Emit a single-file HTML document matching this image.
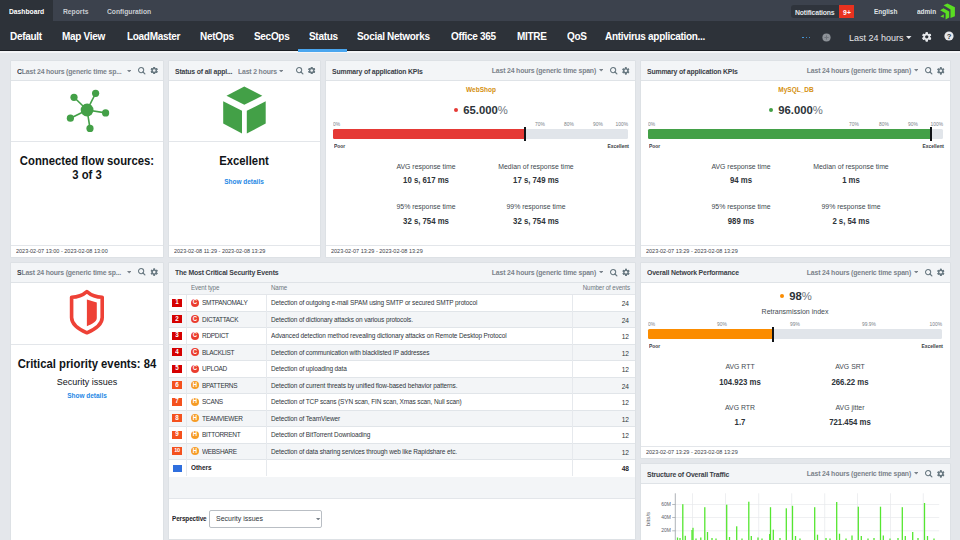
<!DOCTYPE html><html><head><meta charset="utf-8"><style>
html,body{margin:0;padding:0;}
body{width:960px;height:540px;overflow:hidden;position:relative;background:#e4e7eb;font-family:"Liberation Sans",sans-serif;}
.t{position:absolute;white-space:nowrap;}
.r{position:absolute;}
.panel{position:absolute;background:#fff;box-shadow:0 0 0 0.6px #d9dde2;}
.phead{position:absolute;background:#f3f5f7;border-bottom:1px solid #dfe3e7;box-sizing:content-box;}
.pfoot{position:absolute;background:#fff;border-top:1px solid #e3e6ea;box-sizing:border-box;}
</style></head><body>

<div class="r" style="left:0px;top:0px;width:960px;height:21px;background:#3c424d;"></div>
<div class="r" style="left:0px;top:0px;width:53.3px;height:21px;background:#2d3239;"></div>
<div class="t" style="left:9.20px;top:8.92px;font-size:7.155px;line-height:7.155px;font-weight:bold;color:#ffffff;transform:scale(0.9434,1);transform-origin:left center;">Dashboard</div>
<div class="t" style="left:62.60px;top:8.92px;font-size:7.155px;line-height:7.155px;font-weight:bold;color:#c9cdd3;transform:scale(0.9434,1);transform-origin:left center;">Reports</div>
<div class="t" style="left:107.00px;top:8.92px;font-size:7.155px;line-height:7.155px;font-weight:bold;color:#c9cdd3;transform:scale(0.9434,1);transform-origin:left center;">Configuration</div>
<div class="r" style="left:790.5px;top:5.3px;width:49px;height:12.5px;background:#2f343c;border-radius:3px 0 0 3px;"></div>
<div class="r" style="left:839px;top:5.3px;width:14.5px;height:12.5px;background:#e8321f;"></div>
<div class="t" style="left:794.60px;top:9.14px;font-size:7.314px;line-height:7.314px;font-weight:bold;color:#e1e4e8;letter-spacing:-0.180px;transform:scale(0.9434,1);transform-origin:left center;">Notifications</div>
<div class="t" style="left:546.70px;width:600px;text-align:center;top:8.90px;font-size:7.208px;line-height:7.208px;font-weight:bold;color:#ffffff;transform:scale(0.9434,1);transform-origin:center center;">9+</div>
<div class="t" style="left:873.80px;top:9.05px;font-size:6.89px;line-height:6.89px;font-weight:bold;color:#dfe2e6;transform:scale(0.9434,1);transform-origin:left center;">English</div>
<div class="t" style="left:917.00px;top:9.05px;font-size:6.89px;line-height:6.89px;font-weight:bold;color:#dfe2e6;transform:scale(0.9434,1);transform-origin:left center;">admin</div>
<svg class="r" style="left:0;top:0" width="960" height="30"><polygon points="943.5,5.3 947.4,3.6 954.9,7.3 954.9,16.3 950.5,18 950.5,9.6" fill="#5ade22"/><polygon points="940.1,10.2 943.5,8.2 949.2,11.4 949.2,17.6 945.6,19.6 945.6,13.2" fill="#5ade22"/><polygon points="940.4,16.4 943.8,14.2 943.8,17.8" fill="#5ade22"/></svg>
<div class="r" style="left:0px;top:21px;width:960px;height:29px;background:#2d3239;"></div>
<div class="r" style="left:0px;top:49.6px;width:960px;height:1.3px;background:#1b1e23;"></div>
<div class="r" style="left:0px;top:50.9px;width:960px;height:2px;background:#f3f4f6;"></div>
<div class="r" style="left:298.4px;top:48.7px;width:49.1px;height:3.2px;background:#4aa6ef;"></div>
<div class="t" style="left:10.00px;top:31.30px;font-size:10.6px;line-height:10.6px;font-weight:bold;color:#ffffff;letter-spacing:-0.318px;transform:scale(0.9434,1);transform-origin:left center;">Default</div>
<div class="t" style="left:62.30px;top:31.30px;font-size:10.6px;line-height:10.6px;font-weight:bold;color:#ffffff;letter-spacing:-0.318px;transform:scale(0.9434,1);transform-origin:left center;">Map View</div>
<div class="t" style="left:126.70px;top:31.30px;font-size:10.6px;line-height:10.6px;font-weight:bold;color:#ffffff;letter-spacing:-0.318px;transform:scale(0.9434,1);transform-origin:left center;">LoadMaster</div>
<div class="t" style="left:200.30px;top:31.30px;font-size:10.6px;line-height:10.6px;font-weight:bold;color:#ffffff;letter-spacing:-0.318px;transform:scale(0.9434,1);transform-origin:left center;">NetOps</div>
<div class="t" style="left:254.00px;top:31.30px;font-size:10.6px;line-height:10.6px;font-weight:bold;color:#ffffff;letter-spacing:-0.318px;transform:scale(0.9434,1);transform-origin:left center;">SecOps</div>
<div class="t" style="left:308.90px;top:31.30px;font-size:10.6px;line-height:10.6px;font-weight:bold;color:#ffffff;letter-spacing:-0.318px;transform:scale(0.9434,1);transform-origin:left center;">Status</div>
<div class="t" style="left:357.40px;top:31.30px;font-size:10.6px;line-height:10.6px;font-weight:bold;color:#ffffff;letter-spacing:-0.318px;transform:scale(0.9434,1);transform-origin:left center;">Social Networks</div>
<div class="t" style="left:450.50px;top:31.30px;font-size:10.6px;line-height:10.6px;font-weight:bold;color:#ffffff;letter-spacing:-0.318px;transform:scale(0.9434,1);transform-origin:left center;">Office 365</div>
<div class="t" style="left:517.00px;top:31.30px;font-size:10.6px;line-height:10.6px;font-weight:bold;color:#ffffff;letter-spacing:-0.318px;transform:scale(0.9434,1);transform-origin:left center;">MITRE</div>
<div class="t" style="left:566.60px;top:31.30px;font-size:10.6px;line-height:10.6px;font-weight:bold;color:#ffffff;letter-spacing:-0.318px;transform:scale(0.9434,1);transform-origin:left center;">QoS</div>
<div class="t" style="left:605.20px;top:31.30px;font-size:10.6px;line-height:10.6px;font-weight:bold;color:#ffffff;letter-spacing:-0.318px;transform:scale(0.9434,1);transform-origin:left center;">Antivirus application...</div>
<div class="r" style="left:802.4px;top:36.8px;width:1.7px;height:1.7px;background:#4aa6ef;border-radius:50%;"></div>
<div class="r" style="left:805.5px;top:36.8px;width:1.7px;height:1.7px;background:#4aa6ef;border-radius:50%;"></div>
<div class="r" style="left:808.6px;top:36.8px;width:1.7px;height:1.7px;background:#4aa6ef;border-radius:50%;"></div>
<svg class="r" style="left:821.6px;top:33.4px" width="9" height="9" viewBox="0 0 9 9"><circle cx="4.5" cy="4.5" r="4.1" fill="#8d9298"/><line x1="2.4" y1="4.5" x2="6.6" y2="4.5" stroke="#6e737a" stroke-width="1"/><line x1="4.5" y1="2.4" x2="4.5" y2="6.6" stroke="#6e737a" stroke-width="1"/></svg>
<div class="t" style="left:849.00px;top:32.83px;font-size:9.54px;line-height:9.54px;font-weight:normal;color:#e6e8eb;transform:scale(0.9434,1);transform-origin:left center;">Last 24 hours</div>
<svg class="r" style="left:906px;top:36.2px" width="5.5" height="3" viewBox="0 0 5.5 3"><polygon points="0,0 5.5,0 2.75,3" fill="#e6e8eb"/></svg>
<svg class="r" style="left:0;top:0;overflow:visible" width="1" height="1"><circle cx="926.75" cy="36.8" r="3.31" fill="#e6e8eb"/><rect x="925.60" y="32.20" width="2.30" height="9.20" fill="#e6e8eb" transform="rotate(0 926.75 36.8)" rx="0.46"/><rect x="925.60" y="32.20" width="2.30" height="9.20" fill="#e6e8eb" transform="rotate(60 926.75 36.8)" rx="0.46"/><rect x="925.60" y="32.20" width="2.30" height="9.20" fill="#e6e8eb" transform="rotate(120 926.75 36.8)" rx="0.46"/><rect x="925.60" y="32.20" width="2.30" height="9.20" fill="#e6e8eb" transform="rotate(180 926.75 36.8)" rx="0.46"/><rect x="925.60" y="32.20" width="2.30" height="9.20" fill="#e6e8eb" transform="rotate(240 926.75 36.8)" rx="0.46"/><rect x="925.60" y="32.20" width="2.30" height="9.20" fill="#e6e8eb" transform="rotate(300 926.75 36.8)" rx="0.46"/><circle cx="926.75" cy="36.8" r="1.66" fill="#2d3239"/></svg>
<svg class="r" style="left:943.7px;top:31.4px" width="10" height="10" viewBox="0 0 10 10"><circle cx="5" cy="5" r="4.6" fill="#e6e8eb"/><text x="5" y="7.9" font-family="Liberation Sans" font-weight="bold" font-size="7.6" text-anchor="middle" fill="#2d3239">?</text></svg>
<div class="panel" style="left:10.8px;top:61px;width:152.2px;height:196px"></div>
<div class="phead" style="left:10.8px;top:61px;width:152.2px;height:19px"></div>
<div class="pfoot" style="left:10.8px;top:245px;width:152.2px;height:12px"></div>
<div class="t" style="left:15.80px;top:248.69px;font-size:5.83px;line-height:5.83px;font-weight:normal;color:#3c4248;transform:scale(0.9434,1);transform-origin:left center;">2023-02-07 13:00 - 2023-02-08 13:00</div>
<div class="r" style="left:10.8px;top:140.5px;width:152.2px;height:0.8px;background:#e3e6ea;"></div>
<div class="t" style="left:17.00px;top:67.64px;font-size:7.314px;line-height:7.314px;font-weight:bold;color:#7b838b;letter-spacing:-0.180px;transform:scale(0.9434,1);transform-origin:left center;"><span style="color:#3a4046">C</span>Last 24 hours (generic time sp...</div>
<svg class="r" style="left:126.5px;top:69.8px" width="4.4" height="2.4" viewBox="0 0 4.4 2.4"><polygon points="0,0 4.4,0 2.2,2.4" fill="#7b838b"/></svg>
<svg class="r" style="left:137.2px;top:65.7px" width="9" height="9" viewBox="0 0 9 9"><circle cx="4.1" cy="4.1" r="2.6" fill="none" stroke="#687880" stroke-width="1.05"/><line x1="6" y1="6" x2="7.9" y2="7.9" stroke="#687880" stroke-width="1.2" stroke-linecap="round"/></svg>
<svg class="r" style="left:0;top:0;overflow:visible" width="1" height="1"><circle cx="154.2" cy="70.5" r="2.59" fill="#687880"/><rect x="153.30" y="66.90" width="1.80" height="7.20" fill="#687880" transform="rotate(0 154.2 70.5)" rx="0.36"/><rect x="153.30" y="66.90" width="1.80" height="7.20" fill="#687880" transform="rotate(60 154.2 70.5)" rx="0.36"/><rect x="153.30" y="66.90" width="1.80" height="7.20" fill="#687880" transform="rotate(120 154.2 70.5)" rx="0.36"/><rect x="153.30" y="66.90" width="1.80" height="7.20" fill="#687880" transform="rotate(180 154.2 70.5)" rx="0.36"/><rect x="153.30" y="66.90" width="1.80" height="7.20" fill="#687880" transform="rotate(240 154.2 70.5)" rx="0.36"/><rect x="153.30" y="66.90" width="1.80" height="7.20" fill="#687880" transform="rotate(300 154.2 70.5)" rx="0.36"/><circle cx="154.2" cy="70.5" r="1.30" fill="#f3f5f7"/></svg>
<svg class="r" style="left:0;top:0" width="960" height="540"><g stroke="#43a047" stroke-width="1.6"><line x1="87.1" y1="110" x2="74" y2="97.3"/><line x1="87.1" y1="110" x2="95.6" y2="93.3"/><line x1="87.1" y1="110" x2="105.6" y2="112.9"/><line x1="87.1" y1="110" x2="70.4" y2="118.2"/><line x1="87.1" y1="110" x2="90" y2="128.4"/></g><circle cx="87.1" cy="110" r="6.4" fill="#43a047"/><circle cx="74" cy="97.3" r="3.6" fill="#43a047"/><circle cx="95.6" cy="93.3" r="3.6" fill="#43a047"/><circle cx="105.6" cy="112.9" r="3.6" fill="#43a047"/><circle cx="70.4" cy="118.2" r="3.6" fill="#43a047"/><circle cx="90" cy="128.4" r="3.6" fill="#43a047"/></svg>
<div class="t" style="left:-213.00px;width:600px;text-align:center;top:155.01px;font-size:11.978px;line-height:11.978px;font-weight:bold;color:#111418;transform:scale(0.9434,1);transform-origin:center center;">Connected flow sources:</div>
<div class="t" style="left:-213.00px;width:600px;text-align:center;top:169.01px;font-size:11.978px;line-height:11.978px;font-weight:bold;color:#111418;transform:scale(0.9434,1);transform-origin:center center;">3 of 3</div>
<div class="panel" style="left:168.5px;top:61px;width:151.5px;height:196px"></div>
<div class="phead" style="left:168.5px;top:61px;width:151.5px;height:19px"></div>
<div class="pfoot" style="left:168.5px;top:245px;width:151.5px;height:12px"></div>
<div class="t" style="left:173.50px;top:248.69px;font-size:5.83px;line-height:5.83px;font-weight:normal;color:#3c4248;transform:scale(0.9434,1);transform-origin:left center;">2023-02-08 11:29 - 2023-02-08 13:29</div>
<div class="r" style="left:168.5px;top:140.5px;width:151.5px;height:0.8px;background:#e3e6ea;"></div>
<div class="t" style="left:174.90px;top:67.64px;font-size:7.314px;line-height:7.314px;font-weight:bold;color:#3a4046;letter-spacing:-0.180px;transform:scale(0.9434,1);transform-origin:left center;">Status of all appl...</div>
<div class="t" style="left:237.60px;top:67.64px;font-size:7.314px;line-height:7.314px;font-weight:bold;color:#7b838b;letter-spacing:-0.180px;transform:scale(0.9434,1);transform-origin:left center;">Last 2 hours</div>
<svg class="r" style="left:278.8px;top:69.8px" width="4.4" height="2.4" viewBox="0 0 4.4 2.4"><polygon points="0,0 4.4,0 2.2,2.4" fill="#7b838b"/></svg>
<svg class="r" style="left:294.5px;top:65.7px" width="9" height="9" viewBox="0 0 9 9"><circle cx="4.1" cy="4.1" r="2.6" fill="none" stroke="#687880" stroke-width="1.05"/><line x1="6" y1="6" x2="7.9" y2="7.9" stroke="#687880" stroke-width="1.2" stroke-linecap="round"/></svg>
<svg class="r" style="left:0;top:0;overflow:visible" width="1" height="1"><circle cx="311.7" cy="70.5" r="2.59" fill="#687880"/><rect x="310.80" y="66.90" width="1.80" height="7.20" fill="#687880" transform="rotate(0 311.7 70.5)" rx="0.36"/><rect x="310.80" y="66.90" width="1.80" height="7.20" fill="#687880" transform="rotate(60 311.7 70.5)" rx="0.36"/><rect x="310.80" y="66.90" width="1.80" height="7.20" fill="#687880" transform="rotate(120 311.7 70.5)" rx="0.36"/><rect x="310.80" y="66.90" width="1.80" height="7.20" fill="#687880" transform="rotate(180 311.7 70.5)" rx="0.36"/><rect x="310.80" y="66.90" width="1.80" height="7.20" fill="#687880" transform="rotate(240 311.7 70.5)" rx="0.36"/><rect x="310.80" y="66.90" width="1.80" height="7.20" fill="#687880" transform="rotate(300 311.7 70.5)" rx="0.36"/><circle cx="311.7" cy="70.5" r="1.30" fill="#f3f5f7"/></svg>
<svg class="r" style="left:0;top:0" width="960" height="540"><polygon points="244.3,86.5 262.3,95.8 244.3,104.8 226.5,95.8" fill="#43a047"/><polygon points="223.2,101.3 242,110.8 242,133.6 223.2,123.6" fill="#43a047"/><polygon points="265.7,101.3 246.8,110.8 246.8,133.6 265.7,123.6" fill="#43a047"/></svg>
<div class="t" style="left:-55.60px;width:600px;text-align:center;top:154.51px;font-size:11.978px;line-height:11.978px;font-weight:bold;color:#111418;transform:scale(0.9434,1);transform-origin:center center;">Excellent</div>
<div class="t" style="left:-55.60px;width:600px;text-align:center;top:178.56px;font-size:6.89px;line-height:6.89px;font-weight:bold;color:#1e88e5;transform:scale(0.9434,1);transform-origin:center center;">Show details</div>
<div class="panel" style="left:326px;top:61px;width:309px;height:196px"></div>
<div class="phead" style="left:326px;top:61px;width:309px;height:19px"></div>
<div class="pfoot" style="left:326px;top:245px;width:309px;height:12px"></div>
<div class="t" style="left:331.00px;top:248.69px;font-size:5.83px;line-height:5.83px;font-weight:normal;color:#3c4248;transform:scale(0.9434,1);transform-origin:left center;">2023-02-07 13:29 - 2023-02-08 13:29</div>
<div class="t" style="left:332.00px;top:67.64px;font-size:7.314px;line-height:7.314px;font-weight:bold;color:#3a4046;letter-spacing:-0.180px;transform:scale(0.9434,1);transform-origin:left center;">Summary of application KPIs</div>
<svg class="r" style="left:0;top:0;overflow:visible" width="1" height="1"><circle cx="625.8" cy="70.8" r="2.59" fill="#687880"/><rect x="624.90" y="67.20" width="1.80" height="7.20" fill="#687880" transform="rotate(0 625.8 70.8)" rx="0.36"/><rect x="624.90" y="67.20" width="1.80" height="7.20" fill="#687880" transform="rotate(60 625.8 70.8)" rx="0.36"/><rect x="624.90" y="67.20" width="1.80" height="7.20" fill="#687880" transform="rotate(120 625.8 70.8)" rx="0.36"/><rect x="624.90" y="67.20" width="1.80" height="7.20" fill="#687880" transform="rotate(180 625.8 70.8)" rx="0.36"/><rect x="624.90" y="67.20" width="1.80" height="7.20" fill="#687880" transform="rotate(240 625.8 70.8)" rx="0.36"/><rect x="624.90" y="67.20" width="1.80" height="7.20" fill="#687880" transform="rotate(300 625.8 70.8)" rx="0.36"/><circle cx="625.8" cy="70.8" r="1.30" fill="#f3f5f7"/></svg>
<svg class="r" style="left:608.7px;top:66.0px" width="9" height="9" viewBox="0 0 9 9"><circle cx="4.1" cy="4.1" r="2.6" fill="none" stroke="#687880" stroke-width="1.05"/><line x1="6" y1="6" x2="7.9" y2="7.9" stroke="#687880" stroke-width="1.2" stroke-linecap="round"/></svg>
<svg class="r" style="left:598.5px;top:69.3px" width="4.4" height="2.4" viewBox="0 0 4.4 2.4"><polygon points="0,0 4.4,0 2.2,2.4" fill="#7b838b"/></svg>
<div class="t" style="left:-4.00px;width:600px;text-align:right;top:67.14px;font-size:7.314px;line-height:7.314px;font-weight:bold;color:#7b838b;letter-spacing:-0.180px;transform:scale(0.9434,1);transform-origin:right center;">Last 24 hours (generic time span)</div>
<div class="t" style="left:180.50px;width:600px;text-align:center;top:86.56px;font-size:6.89px;line-height:6.89px;font-weight:bold;color:#d4900f;transform:scale(0.9434,1);transform-origin:center center;">WebShop</div>
<div class="t" style="left:181px;width:600px;text-align:center;top:104.5px;font-size:11.3px;line-height:11.3px;font-weight:bold;color:#2d3339"><span style="display:inline-block;width:4px;height:4px;border-radius:50%;background:#e53935;vertical-align:middle;margin-right:5px;position:relative;top:-1px"></span>65.000<span style="font-weight:normal;color:#6d757c">%</span></div>
<div class="r" style="left:333.3px;top:129px;width:295.1px;height:9.8px;background:#e1e5ea;border-radius:1.5px;"></div>
<div class="r" style="left:333.3px;top:129px;width:191.90000000000003px;height:9.8px;background:#e53935;border-radius:1.5px 0 0 1.5px;"></div>
<div class="r" style="left:524.3000000000001px;top:126.9px;width:1.9px;height:14.6px;background:#111418;"></div>
<div class="t" style="left:333.30px;top:121.60px;font-size:5.194px;line-height:5.194px;font-weight:normal;color:#7a8188;transform:scale(0.9434,1);transform-origin:left center;">0%</div>
<div class="t" style="left:239.60px;width:600px;text-align:center;top:121.60px;font-size:5.194px;line-height:5.194px;font-weight:normal;color:#7a8188;transform:scale(0.9434,1);transform-origin:center center;">70%</div>
<div class="t" style="left:269.20px;width:600px;text-align:center;top:121.60px;font-size:5.194px;line-height:5.194px;font-weight:normal;color:#7a8188;transform:scale(0.9434,1);transform-origin:center center;">80%</div>
<div class="t" style="left:298.30px;width:600px;text-align:center;top:121.60px;font-size:5.194px;line-height:5.194px;font-weight:normal;color:#7a8188;transform:scale(0.9434,1);transform-origin:center center;">90%</div>
<div class="t" style="left:28.40px;width:600px;text-align:right;top:121.60px;font-size:5.194px;line-height:5.194px;font-weight:normal;color:#7a8188;transform:scale(0.9434,1);transform-origin:right center;">100%</div>
<div class="t" style="left:333.80px;top:143.80px;font-size:5.194px;line-height:5.194px;font-weight:bold;color:#3a4046;transform:scale(0.9434,1);transform-origin:left center;">Poor</div>
<div class="t" style="left:29.20px;width:600px;text-align:right;top:144.00px;font-size:5.194px;line-height:5.194px;font-weight:bold;color:#3a4046;transform:scale(0.9434,1);transform-origin:right center;">Excellent</div>
<div class="t" style="left:125.70px;width:600px;text-align:center;top:162.64px;font-size:7.314px;line-height:7.314px;font-weight:normal;color:#40474e;transform:scale(0.9434,1);transform-origin:center center;">AVG response time</div>
<div class="t" style="left:125.70px;width:600px;text-align:center;top:177.37px;font-size:8.268px;line-height:8.268px;font-weight:bold;color:#2d3339;transform:scale(0.9434,1);transform-origin:center center;">10 s, 617 ms</div>
<div class="t" style="left:235.80px;width:600px;text-align:center;top:162.64px;font-size:7.314px;line-height:7.314px;font-weight:normal;color:#40474e;transform:scale(0.9434,1);transform-origin:center center;">Median of response time</div>
<div class="t" style="left:235.80px;width:600px;text-align:center;top:177.37px;font-size:8.268px;line-height:8.268px;font-weight:bold;color:#2d3339;transform:scale(0.9434,1);transform-origin:center center;">17 s, 749 ms</div>
<div class="t" style="left:125.70px;width:600px;text-align:center;top:203.24px;font-size:7.314px;line-height:7.314px;font-weight:normal;color:#40474e;transform:scale(0.9434,1);transform-origin:center center;">95% response time</div>
<div class="t" style="left:125.70px;width:600px;text-align:center;top:217.87px;font-size:8.268px;line-height:8.268px;font-weight:bold;color:#2d3339;transform:scale(0.9434,1);transform-origin:center center;">32 s, 754 ms</div>
<div class="t" style="left:235.80px;width:600px;text-align:center;top:203.24px;font-size:7.314px;line-height:7.314px;font-weight:normal;color:#40474e;transform:scale(0.9434,1);transform-origin:center center;">99% response time</div>
<div class="t" style="left:235.80px;width:600px;text-align:center;top:217.87px;font-size:8.268px;line-height:8.268px;font-weight:bold;color:#2d3339;transform:scale(0.9434,1);transform-origin:center center;">32 s, 754 ms</div>
<div class="panel" style="left:641px;top:61px;width:309px;height:196px"></div>
<div class="phead" style="left:641px;top:61px;width:309px;height:19px"></div>
<div class="pfoot" style="left:641px;top:245px;width:309px;height:12px"></div>
<div class="t" style="left:646.00px;top:248.69px;font-size:5.83px;line-height:5.83px;font-weight:normal;color:#3c4248;transform:scale(0.9434,1);transform-origin:left center;">2023-02-07 13:29 - 2023-02-08 13:29</div>
<div class="t" style="left:647.00px;top:67.64px;font-size:7.314px;line-height:7.314px;font-weight:bold;color:#3a4046;letter-spacing:-0.180px;transform:scale(0.9434,1);transform-origin:left center;">Summary of application KPIs</div>
<svg class="r" style="left:0;top:0;overflow:visible" width="1" height="1"><circle cx="940.8" cy="70.8" r="2.59" fill="#687880"/><rect x="939.90" y="67.20" width="1.80" height="7.20" fill="#687880" transform="rotate(0 940.8 70.8)" rx="0.36"/><rect x="939.90" y="67.20" width="1.80" height="7.20" fill="#687880" transform="rotate(60 940.8 70.8)" rx="0.36"/><rect x="939.90" y="67.20" width="1.80" height="7.20" fill="#687880" transform="rotate(120 940.8 70.8)" rx="0.36"/><rect x="939.90" y="67.20" width="1.80" height="7.20" fill="#687880" transform="rotate(180 940.8 70.8)" rx="0.36"/><rect x="939.90" y="67.20" width="1.80" height="7.20" fill="#687880" transform="rotate(240 940.8 70.8)" rx="0.36"/><rect x="939.90" y="67.20" width="1.80" height="7.20" fill="#687880" transform="rotate(300 940.8 70.8)" rx="0.36"/><circle cx="940.8" cy="70.8" r="1.30" fill="#f3f5f7"/></svg>
<svg class="r" style="left:923.7px;top:66.0px" width="9" height="9" viewBox="0 0 9 9"><circle cx="4.1" cy="4.1" r="2.6" fill="none" stroke="#687880" stroke-width="1.05"/><line x1="6" y1="6" x2="7.9" y2="7.9" stroke="#687880" stroke-width="1.2" stroke-linecap="round"/></svg>
<svg class="r" style="left:913.5px;top:69.3px" width="4.4" height="2.4" viewBox="0 0 4.4 2.4"><polygon points="0,0 4.4,0 2.2,2.4" fill="#7b838b"/></svg>
<div class="t" style="left:311.00px;width:600px;text-align:right;top:67.14px;font-size:7.314px;line-height:7.314px;font-weight:bold;color:#7b838b;letter-spacing:-0.180px;transform:scale(0.9434,1);transform-origin:right center;">Last 24 hours (generic time span)</div>
<div class="t" style="left:495.50px;width:600px;text-align:center;top:86.56px;font-size:6.89px;line-height:6.89px;font-weight:bold;color:#d4900f;transform:scale(0.9434,1);transform-origin:center center;">MySQL_DB</div>
<div class="t" style="left:496px;width:600px;text-align:center;top:104.5px;font-size:11.3px;line-height:11.3px;font-weight:bold;color:#2d3339"><span style="display:inline-block;width:4px;height:4px;border-radius:50%;background:#43a047;vertical-align:middle;margin-right:5px;position:relative;top:-1px"></span>96.000<span style="font-weight:normal;color:#6d757c">%</span></div>
<div class="r" style="left:648.3px;top:129px;width:295.1px;height:9.8px;background:#e1e5ea;border-radius:1.5px;"></div>
<div class="r" style="left:648.3px;top:129px;width:282.30000000000007px;height:9.8px;background:#43a047;border-radius:1.5px 0 0 1.5px;"></div>
<div class="r" style="left:929.7px;top:126.9px;width:1.9px;height:14.6px;background:#111418;"></div>
<div class="t" style="left:648.30px;top:121.60px;font-size:5.194px;line-height:5.194px;font-weight:normal;color:#7a8188;transform:scale(0.9434,1);transform-origin:left center;">0%</div>
<div class="t" style="left:554.00px;width:600px;text-align:center;top:121.60px;font-size:5.194px;line-height:5.194px;font-weight:normal;color:#7a8188;transform:scale(0.9434,1);transform-origin:center center;">70%</div>
<div class="t" style="left:583.50px;width:600px;text-align:center;top:121.60px;font-size:5.194px;line-height:5.194px;font-weight:normal;color:#7a8188;transform:scale(0.9434,1);transform-origin:center center;">80%</div>
<div class="t" style="left:612.80px;width:600px;text-align:center;top:121.60px;font-size:5.194px;line-height:5.194px;font-weight:normal;color:#7a8188;transform:scale(0.9434,1);transform-origin:center center;">90%</div>
<div class="t" style="left:343.40px;width:600px;text-align:right;top:121.60px;font-size:5.194px;line-height:5.194px;font-weight:normal;color:#7a8188;transform:scale(0.9434,1);transform-origin:right center;">100%</div>
<div class="t" style="left:648.80px;top:143.80px;font-size:5.194px;line-height:5.194px;font-weight:bold;color:#3a4046;transform:scale(0.9434,1);transform-origin:left center;">Poor</div>
<div class="t" style="left:344.20px;width:600px;text-align:right;top:144.00px;font-size:5.194px;line-height:5.194px;font-weight:bold;color:#3a4046;transform:scale(0.9434,1);transform-origin:right center;">Excellent</div>
<div class="t" style="left:440.70px;width:600px;text-align:center;top:162.64px;font-size:7.314px;line-height:7.314px;font-weight:normal;color:#40474e;transform:scale(0.9434,1);transform-origin:center center;">AVG response time</div>
<div class="t" style="left:440.70px;width:600px;text-align:center;top:177.37px;font-size:8.268px;line-height:8.268px;font-weight:bold;color:#2d3339;transform:scale(0.9434,1);transform-origin:center center;">94 ms</div>
<div class="t" style="left:550.80px;width:600px;text-align:center;top:162.64px;font-size:7.314px;line-height:7.314px;font-weight:normal;color:#40474e;transform:scale(0.9434,1);transform-origin:center center;">Median of response time</div>
<div class="t" style="left:550.80px;width:600px;text-align:center;top:177.37px;font-size:8.268px;line-height:8.268px;font-weight:bold;color:#2d3339;transform:scale(0.9434,1);transform-origin:center center;">1 ms</div>
<div class="t" style="left:440.70px;width:600px;text-align:center;top:203.24px;font-size:7.314px;line-height:7.314px;font-weight:normal;color:#40474e;transform:scale(0.9434,1);transform-origin:center center;">95% response time</div>
<div class="t" style="left:440.70px;width:600px;text-align:center;top:217.87px;font-size:8.268px;line-height:8.268px;font-weight:bold;color:#2d3339;transform:scale(0.9434,1);transform-origin:center center;">989 ms</div>
<div class="t" style="left:550.80px;width:600px;text-align:center;top:203.24px;font-size:7.314px;line-height:7.314px;font-weight:normal;color:#40474e;transform:scale(0.9434,1);transform-origin:center center;">99% response time</div>
<div class="t" style="left:550.80px;width:600px;text-align:center;top:217.87px;font-size:8.268px;line-height:8.268px;font-weight:bold;color:#2d3339;transform:scale(0.9434,1);transform-origin:center center;">2 s, 54 ms</div>
<div class="panel" style="left:10.8px;top:263px;width:152.2px;height:290px"></div>
<div class="phead" style="left:10.8px;top:263px;width:152.2px;height:19px"></div>
<div class="r" style="left:10.8px;top:343.5px;width:152.2px;height:0.8px;background:#e3e6ea;"></div>
<div class="t" style="left:17.00px;top:269.14px;font-size:7.314px;line-height:7.314px;font-weight:bold;color:#7b838b;letter-spacing:-0.180px;transform:scale(0.9434,1);transform-origin:left center;"><span style="color:#3a4046">S</span>Last 24 hours (generic time sp...</div>
<svg class="r" style="left:126.5px;top:271.3px" width="4.4" height="2.4" viewBox="0 0 4.4 2.4"><polygon points="0,0 4.4,0 2.2,2.4" fill="#7b838b"/></svg>
<svg class="r" style="left:137.2px;top:267.3px" width="9" height="9" viewBox="0 0 9 9"><circle cx="4.1" cy="4.1" r="2.6" fill="none" stroke="#687880" stroke-width="1.05"/><line x1="6" y1="6" x2="7.9" y2="7.9" stroke="#687880" stroke-width="1.2" stroke-linecap="round"/></svg>
<svg class="r" style="left:0;top:0;overflow:visible" width="1" height="1"><circle cx="154.2" cy="272.1" r="2.59" fill="#687880"/><rect x="153.30" y="268.50" width="1.80" height="7.20" fill="#687880" transform="rotate(0 154.2 272.1)" rx="0.36"/><rect x="153.30" y="268.50" width="1.80" height="7.20" fill="#687880" transform="rotate(60 154.2 272.1)" rx="0.36"/><rect x="153.30" y="268.50" width="1.80" height="7.20" fill="#687880" transform="rotate(120 154.2 272.1)" rx="0.36"/><rect x="153.30" y="268.50" width="1.80" height="7.20" fill="#687880" transform="rotate(180 154.2 272.1)" rx="0.36"/><rect x="153.30" y="268.50" width="1.80" height="7.20" fill="#687880" transform="rotate(240 154.2 272.1)" rx="0.36"/><rect x="153.30" y="268.50" width="1.80" height="7.20" fill="#687880" transform="rotate(300 154.2 272.1)" rx="0.36"/><circle cx="154.2" cy="272.1" r="1.30" fill="#f3f5f7"/></svg>
<svg class="r" style="left:0;top:0" width="960" height="540"><path d="M86.9,291.6 Q80.5,297.2 71.6,297.2 L71.6,317.5 C71.6,324 78,329 86.9,332.8 C95.8,329 102.2,324 102.2,317.5 L102.2,297.2 Q93.3,297.2 86.9,291.6 Z" fill="none" stroke="#ee4136" stroke-width="3.6" stroke-linejoin="round"/><path d="M86.9,299.4 L96.8,302.6 L96.8,318 C96.8,321.5 92.5,324 86.9,326.2 Z" fill="#ee4136"/></svg>
<div class="t" style="left:-213.20px;width:600px;text-align:center;top:357.71px;font-size:11.978px;line-height:11.978px;font-weight:bold;color:#111418;transform:scale(0.9434,1);transform-origin:center center;">Critical priority events: 84</div>
<div class="t" style="left:-213.20px;width:600px;text-align:center;top:376.63px;font-size:9.54px;line-height:9.54px;font-weight:normal;color:#111418;transform:scale(0.9434,1);transform-origin:center center;">Security issues</div>
<div class="t" style="left:-213.20px;width:600px;text-align:center;top:392.95px;font-size:6.89px;line-height:6.89px;font-weight:bold;color:#1e88e5;transform:scale(0.9434,1);transform-origin:center center;">Show details</div>
<div class="panel" style="left:168.5px;top:263px;width:466.7px;height:276px"></div>
<div class="phead" style="left:168.5px;top:263px;width:466.7px;height:19px"></div>
<div class="t" style="left:174.60px;top:269.14px;font-size:7.314px;line-height:7.314px;font-weight:bold;color:#3a4046;letter-spacing:-0.180px;transform:scale(0.9434,1);transform-origin:left center;">The Most Critical Security Events</div>
<svg class="r" style="left:0;top:0;overflow:visible" width="1" height="1"><circle cx="626.0" cy="272.3" r="2.59" fill="#687880"/><rect x="625.10" y="268.70" width="1.80" height="7.20" fill="#687880" transform="rotate(0 626.0 272.3)" rx="0.36"/><rect x="625.10" y="268.70" width="1.80" height="7.20" fill="#687880" transform="rotate(60 626.0 272.3)" rx="0.36"/><rect x="625.10" y="268.70" width="1.80" height="7.20" fill="#687880" transform="rotate(120 626.0 272.3)" rx="0.36"/><rect x="625.10" y="268.70" width="1.80" height="7.20" fill="#687880" transform="rotate(180 626.0 272.3)" rx="0.36"/><rect x="625.10" y="268.70" width="1.80" height="7.20" fill="#687880" transform="rotate(240 626.0 272.3)" rx="0.36"/><rect x="625.10" y="268.70" width="1.80" height="7.20" fill="#687880" transform="rotate(300 626.0 272.3)" rx="0.36"/><circle cx="626.0" cy="272.3" r="1.30" fill="#f3f5f7"/></svg>
<svg class="r" style="left:608.9000000000001px;top:267.5px" width="9" height="9" viewBox="0 0 9 9"><circle cx="4.1" cy="4.1" r="2.6" fill="none" stroke="#687880" stroke-width="1.05"/><line x1="6" y1="6" x2="7.9" y2="7.9" stroke="#687880" stroke-width="1.2" stroke-linecap="round"/></svg>
<svg class="r" style="left:598.7px;top:270.8px" width="4.4" height="2.4" viewBox="0 0 4.4 2.4"><polygon points="0,0 4.4,0 2.2,2.4" fill="#7b838b"/></svg>
<div class="t" style="left:-3.80px;width:600px;text-align:right;top:268.64px;font-size:7.314px;line-height:7.314px;font-weight:bold;color:#7b838b;letter-spacing:-0.180px;transform:scale(0.9434,1);transform-origin:right center;">Last 24 hours (generic time span)</div>
<div class="r" style="left:168.5px;top:282.5px;width:466.7px;height:11.8px;background:#f3f5f7;"></div>
<div class="r" style="left:168.5px;top:294.2px;width:466.7px;height:0.7px;background:#e3e6ea;"></div>
<div class="t" style="left:191.30px;top:284.91px;font-size:6.572px;line-height:6.572px;font-weight:normal;color:#6f777e;letter-spacing:-0.106px;transform:scale(0.9434,1);transform-origin:left center;">Event type</div>
<div class="t" style="left:270.90px;top:284.91px;font-size:6.572px;line-height:6.572px;font-weight:normal;color:#6f777e;letter-spacing:-0.106px;transform:scale(0.9434,1);transform-origin:left center;">Name</div>
<div class="t" style="left:29.60px;width:600px;text-align:right;top:284.91px;font-size:6.572px;line-height:6.572px;font-weight:normal;color:#6f777e;letter-spacing:-0.106px;transform:scale(0.9434,1);transform-origin:right center;">Number of events</div>
<div class="r" style="left:168.5px;top:294.6px;width:466.7px;height:16.5px;background:#ffffff;"></div>
<div class="r" style="left:172.4px;top:298.95000000000005px;width:9.6px;height:7.8px;background:#d50000;"></div>
<div class="t" style="left:-122.80px;width:600px;text-align:center;top:299.31px;font-size:6.678px;line-height:6.678px;font-weight:bold;color:#fff;transform:scale(0.9434,1);transform-origin:center center;">1</div>
<div class="r" style="left:191px;top:298.85px;width:8px;height:8px;background:#ea3d2f;border-radius:50%;"></div>
<div class="t" style="left:-104.90px;width:600px;text-align:center;top:299.47px;font-size:6.36px;line-height:6.36px;font-weight:bold;color:#fff;transform:scale(0.9434,1);transform-origin:center center;">C</div>
<div class="t" style="left:201.70px;top:300.41px;font-size:6.89px;line-height:6.89px;font-weight:normal;color:#2f353b;letter-spacing:-0.318px;transform:scale(0.9434,1);transform-origin:left center;">SMTPANOMALY</div>
<div class="t" style="left:270.90px;top:300.41px;font-size:6.89px;line-height:6.89px;font-weight:normal;color:#2f353b;letter-spacing:-0.127px;transform:scale(0.9434,1);transform-origin:left center;">Detection of outgoing e-mail SPAM using SMTP or secured SMTP protocol</div>
<div class="t" style="left:29.40px;width:600px;text-align:right;top:300.35px;font-size:6.996px;line-height:6.996px;font-weight:normal;color:#2f353b;transform:scale(0.9434,1);transform-origin:right center;">24</div>
<div class="r" style="left:168.5px;top:311.1px;width:466.7px;height:16.5px;background:#f3f5f7;"></div>
<div class="r" style="left:172.4px;top:315.45000000000005px;width:9.6px;height:7.8px;background:#d50000;"></div>
<div class="t" style="left:-122.80px;width:600px;text-align:center;top:315.81px;font-size:6.678px;line-height:6.678px;font-weight:bold;color:#fff;transform:scale(0.9434,1);transform-origin:center center;">2</div>
<div class="r" style="left:191px;top:315.35px;width:8px;height:8px;background:#ea3d2f;border-radius:50%;"></div>
<div class="t" style="left:-104.90px;width:600px;text-align:center;top:315.97px;font-size:6.36px;line-height:6.36px;font-weight:bold;color:#fff;transform:scale(0.9434,1);transform-origin:center center;">C</div>
<div class="t" style="left:201.70px;top:316.91px;font-size:6.89px;line-height:6.89px;font-weight:normal;color:#2f353b;letter-spacing:-0.318px;transform:scale(0.9434,1);transform-origin:left center;">DICTATTACK</div>
<div class="t" style="left:270.90px;top:316.91px;font-size:6.89px;line-height:6.89px;font-weight:normal;color:#2f353b;letter-spacing:-0.127px;transform:scale(0.9434,1);transform-origin:left center;">Detection of dictionary attacks on various protocols.</div>
<div class="t" style="left:29.40px;width:600px;text-align:right;top:316.85px;font-size:6.996px;line-height:6.996px;font-weight:normal;color:#2f353b;transform:scale(0.9434,1);transform-origin:right center;">24</div>
<div class="r" style="left:168.5px;top:327.6px;width:466.7px;height:16.5px;background:#ffffff;"></div>
<div class="r" style="left:172.4px;top:331.95000000000005px;width:9.6px;height:7.8px;background:#d50000;"></div>
<div class="t" style="left:-122.80px;width:600px;text-align:center;top:332.31px;font-size:6.678px;line-height:6.678px;font-weight:bold;color:#fff;transform:scale(0.9434,1);transform-origin:center center;">3</div>
<div class="r" style="left:191px;top:331.85px;width:8px;height:8px;background:#ea3d2f;border-radius:50%;"></div>
<div class="t" style="left:-104.90px;width:600px;text-align:center;top:332.47px;font-size:6.36px;line-height:6.36px;font-weight:bold;color:#fff;transform:scale(0.9434,1);transform-origin:center center;">C</div>
<div class="t" style="left:201.70px;top:333.41px;font-size:6.89px;line-height:6.89px;font-weight:normal;color:#2f353b;letter-spacing:-0.318px;transform:scale(0.9434,1);transform-origin:left center;">RDPDICT</div>
<div class="t" style="left:270.90px;top:333.41px;font-size:6.89px;line-height:6.89px;font-weight:normal;color:#2f353b;letter-spacing:-0.127px;transform:scale(0.9434,1);transform-origin:left center;">Advanced detection method revealing dictionary attacks on Remote Desktop Protocol</div>
<div class="t" style="left:29.40px;width:600px;text-align:right;top:333.35px;font-size:6.996px;line-height:6.996px;font-weight:normal;color:#2f353b;transform:scale(0.9434,1);transform-origin:right center;">12</div>
<div class="r" style="left:168.5px;top:344.1px;width:466.7px;height:16.5px;background:#f3f5f7;"></div>
<div class="r" style="left:172.4px;top:348.45000000000005px;width:9.6px;height:7.8px;background:#d50000;"></div>
<div class="t" style="left:-122.80px;width:600px;text-align:center;top:348.81px;font-size:6.678px;line-height:6.678px;font-weight:bold;color:#fff;transform:scale(0.9434,1);transform-origin:center center;">4</div>
<div class="r" style="left:191px;top:348.35px;width:8px;height:8px;background:#ea3d2f;border-radius:50%;"></div>
<div class="t" style="left:-104.90px;width:600px;text-align:center;top:348.97px;font-size:6.36px;line-height:6.36px;font-weight:bold;color:#fff;transform:scale(0.9434,1);transform-origin:center center;">C</div>
<div class="t" style="left:201.70px;top:349.91px;font-size:6.89px;line-height:6.89px;font-weight:normal;color:#2f353b;letter-spacing:-0.318px;transform:scale(0.9434,1);transform-origin:left center;">BLACKLIST</div>
<div class="t" style="left:270.90px;top:349.91px;font-size:6.89px;line-height:6.89px;font-weight:normal;color:#2f353b;letter-spacing:-0.127px;transform:scale(0.9434,1);transform-origin:left center;">Detection of communication with blacklisted IP addresses</div>
<div class="t" style="left:29.40px;width:600px;text-align:right;top:349.85px;font-size:6.996px;line-height:6.996px;font-weight:normal;color:#2f353b;transform:scale(0.9434,1);transform-origin:right center;">12</div>
<div class="r" style="left:168.5px;top:360.6px;width:466.7px;height:16.5px;background:#ffffff;"></div>
<div class="r" style="left:172.4px;top:364.95000000000005px;width:9.6px;height:7.8px;background:#d50000;"></div>
<div class="t" style="left:-122.80px;width:600px;text-align:center;top:365.31px;font-size:6.678px;line-height:6.678px;font-weight:bold;color:#fff;transform:scale(0.9434,1);transform-origin:center center;">5</div>
<div class="r" style="left:191px;top:364.85px;width:8px;height:8px;background:#ea3d2f;border-radius:50%;"></div>
<div class="t" style="left:-104.90px;width:600px;text-align:center;top:365.47px;font-size:6.36px;line-height:6.36px;font-weight:bold;color:#fff;transform:scale(0.9434,1);transform-origin:center center;">C</div>
<div class="t" style="left:201.70px;top:366.41px;font-size:6.89px;line-height:6.89px;font-weight:normal;color:#2f353b;letter-spacing:-0.318px;transform:scale(0.9434,1);transform-origin:left center;">UPLOAD</div>
<div class="t" style="left:270.90px;top:366.41px;font-size:6.89px;line-height:6.89px;font-weight:normal;color:#2f353b;letter-spacing:-0.127px;transform:scale(0.9434,1);transform-origin:left center;">Detection of uploading data</div>
<div class="t" style="left:29.40px;width:600px;text-align:right;top:366.35px;font-size:6.996px;line-height:6.996px;font-weight:normal;color:#2f353b;transform:scale(0.9434,1);transform-origin:right center;">12</div>
<div class="r" style="left:168.5px;top:377.1px;width:466.7px;height:16.5px;background:#f3f5f7;"></div>
<div class="r" style="left:172.4px;top:381.45000000000005px;width:9.6px;height:7.8px;background:#f4511e;"></div>
<div class="t" style="left:-122.80px;width:600px;text-align:center;top:381.81px;font-size:6.678px;line-height:6.678px;font-weight:bold;color:#fff;transform:scale(0.9434,1);transform-origin:center center;">6</div>
<div class="r" style="left:191px;top:381.35px;width:8px;height:8px;background:#f69c26;border-radius:50%;"></div>
<div class="t" style="left:-104.90px;width:600px;text-align:center;top:381.97px;font-size:6.36px;line-height:6.36px;font-weight:bold;color:#fff;transform:scale(0.9434,1);transform-origin:center center;">H</div>
<div class="t" style="left:201.70px;top:382.91px;font-size:6.89px;line-height:6.89px;font-weight:normal;color:#2f353b;letter-spacing:-0.318px;transform:scale(0.9434,1);transform-origin:left center;">BPATTERNS</div>
<div class="t" style="left:270.90px;top:382.91px;font-size:6.89px;line-height:6.89px;font-weight:normal;color:#2f353b;letter-spacing:-0.127px;transform:scale(0.9434,1);transform-origin:left center;">Detection of current threats by unified flow-based behavior patterns.</div>
<div class="t" style="left:29.40px;width:600px;text-align:right;top:382.85px;font-size:6.996px;line-height:6.996px;font-weight:normal;color:#2f353b;transform:scale(0.9434,1);transform-origin:right center;">24</div>
<div class="r" style="left:168.5px;top:393.6px;width:466.7px;height:16.5px;background:#ffffff;"></div>
<div class="r" style="left:172.4px;top:397.95000000000005px;width:9.6px;height:7.8px;background:#f4511e;"></div>
<div class="t" style="left:-122.80px;width:600px;text-align:center;top:398.31px;font-size:6.678px;line-height:6.678px;font-weight:bold;color:#fff;transform:scale(0.9434,1);transform-origin:center center;">7</div>
<div class="r" style="left:191px;top:397.85px;width:8px;height:8px;background:#f69c26;border-radius:50%;"></div>
<div class="t" style="left:-104.90px;width:600px;text-align:center;top:398.47px;font-size:6.36px;line-height:6.36px;font-weight:bold;color:#fff;transform:scale(0.9434,1);transform-origin:center center;">H</div>
<div class="t" style="left:201.70px;top:399.41px;font-size:6.89px;line-height:6.89px;font-weight:normal;color:#2f353b;letter-spacing:-0.318px;transform:scale(0.9434,1);transform-origin:left center;">SCANS</div>
<div class="t" style="left:270.90px;top:399.41px;font-size:6.89px;line-height:6.89px;font-weight:normal;color:#2f353b;letter-spacing:-0.127px;transform:scale(0.9434,1);transform-origin:left center;">Detection of TCP scans (SYN scan, FIN scan, Xmas scan, Null scan)</div>
<div class="t" style="left:29.40px;width:600px;text-align:right;top:399.35px;font-size:6.996px;line-height:6.996px;font-weight:normal;color:#2f353b;transform:scale(0.9434,1);transform-origin:right center;">12</div>
<div class="r" style="left:168.5px;top:410.1px;width:466.7px;height:16.5px;background:#f3f5f7;"></div>
<div class="r" style="left:172.4px;top:414.45000000000005px;width:9.6px;height:7.8px;background:#f4511e;"></div>
<div class="t" style="left:-122.80px;width:600px;text-align:center;top:414.81px;font-size:6.678px;line-height:6.678px;font-weight:bold;color:#fff;transform:scale(0.9434,1);transform-origin:center center;">8</div>
<div class="r" style="left:191px;top:414.35px;width:8px;height:8px;background:#f69c26;border-radius:50%;"></div>
<div class="t" style="left:-104.90px;width:600px;text-align:center;top:414.97px;font-size:6.36px;line-height:6.36px;font-weight:bold;color:#fff;transform:scale(0.9434,1);transform-origin:center center;">H</div>
<div class="t" style="left:201.70px;top:415.91px;font-size:6.89px;line-height:6.89px;font-weight:normal;color:#2f353b;letter-spacing:-0.318px;transform:scale(0.9434,1);transform-origin:left center;">TEAMVIEWER</div>
<div class="t" style="left:270.90px;top:415.91px;font-size:6.89px;line-height:6.89px;font-weight:normal;color:#2f353b;letter-spacing:-0.127px;transform:scale(0.9434,1);transform-origin:left center;">Detection of TeamViewer</div>
<div class="t" style="left:29.40px;width:600px;text-align:right;top:415.85px;font-size:6.996px;line-height:6.996px;font-weight:normal;color:#2f353b;transform:scale(0.9434,1);transform-origin:right center;">12</div>
<div class="r" style="left:168.5px;top:426.6px;width:466.7px;height:16.5px;background:#ffffff;"></div>
<div class="r" style="left:172.4px;top:430.95000000000005px;width:9.6px;height:7.8px;background:#f4511e;"></div>
<div class="t" style="left:-122.80px;width:600px;text-align:center;top:431.31px;font-size:6.678px;line-height:6.678px;font-weight:bold;color:#fff;transform:scale(0.9434,1);transform-origin:center center;">9</div>
<div class="r" style="left:191px;top:430.85px;width:8px;height:8px;background:#f69c26;border-radius:50%;"></div>
<div class="t" style="left:-104.90px;width:600px;text-align:center;top:431.47px;font-size:6.36px;line-height:6.36px;font-weight:bold;color:#fff;transform:scale(0.9434,1);transform-origin:center center;">H</div>
<div class="t" style="left:201.70px;top:432.41px;font-size:6.89px;line-height:6.89px;font-weight:normal;color:#2f353b;letter-spacing:-0.318px;transform:scale(0.9434,1);transform-origin:left center;">BITTORRENT</div>
<div class="t" style="left:270.90px;top:432.41px;font-size:6.89px;line-height:6.89px;font-weight:normal;color:#2f353b;letter-spacing:-0.127px;transform:scale(0.9434,1);transform-origin:left center;">Detection of BitTorrent Downloading</div>
<div class="t" style="left:29.40px;width:600px;text-align:right;top:432.35px;font-size:6.996px;line-height:6.996px;font-weight:normal;color:#2f353b;transform:scale(0.9434,1);transform-origin:right center;">12</div>
<div class="r" style="left:168.5px;top:443.1px;width:466.7px;height:16.5px;background:#f3f5f7;"></div>
<div class="r" style="left:172.4px;top:447.45000000000005px;width:9.6px;height:7.8px;background:#f4511e;"></div>
<div class="t" style="left:-122.80px;width:600px;text-align:center;top:448.18px;font-size:5.936px;line-height:5.936px;font-weight:bold;color:#fff;letter-spacing:-0.318px;transform:scale(0.9434,1);transform-origin:center center;">10</div>
<div class="r" style="left:191px;top:447.35px;width:8px;height:8px;background:#f69c26;border-radius:50%;"></div>
<div class="t" style="left:-104.90px;width:600px;text-align:center;top:447.97px;font-size:6.36px;line-height:6.36px;font-weight:bold;color:#fff;transform:scale(0.9434,1);transform-origin:center center;">H</div>
<div class="t" style="left:201.70px;top:448.91px;font-size:6.89px;line-height:6.89px;font-weight:normal;color:#2f353b;letter-spacing:-0.318px;transform:scale(0.9434,1);transform-origin:left center;">WEBSHARE</div>
<div class="t" style="left:270.90px;top:448.91px;font-size:6.89px;line-height:6.89px;font-weight:normal;color:#2f353b;letter-spacing:-0.127px;transform:scale(0.9434,1);transform-origin:left center;">Detection of data sharing services through web like Rapidshare etc.</div>
<div class="t" style="left:29.40px;width:600px;text-align:right;top:448.85px;font-size:6.996px;line-height:6.996px;font-weight:normal;color:#2f353b;transform:scale(0.9434,1);transform-origin:right center;">12</div>
<svg class="r" style="left:0;top:0" width="960" height="540"></svg>
<div class="r" style="left:168.5px;top:310.6px;width:466.7px;height:1px;background:#e1e5e9;"></div>
<div class="r" style="left:168.5px;top:327.1px;width:466.7px;height:1px;background:#e1e5e9;"></div>
<div class="r" style="left:168.5px;top:343.6px;width:466.7px;height:1px;background:#e1e5e9;"></div>
<div class="r" style="left:168.5px;top:360.1px;width:466.7px;height:1px;background:#e1e5e9;"></div>
<div class="r" style="left:168.5px;top:376.6px;width:466.7px;height:1px;background:#e1e5e9;"></div>
<div class="r" style="left:168.5px;top:393.1px;width:466.7px;height:1px;background:#e1e5e9;"></div>
<div class="r" style="left:168.5px;top:409.6px;width:466.7px;height:1px;background:#e1e5e9;"></div>
<div class="r" style="left:168.5px;top:426.1px;width:466.7px;height:1px;background:#e1e5e9;"></div>
<div class="r" style="left:168.5px;top:442.6px;width:466.7px;height:1px;background:#e1e5e9;"></div>
<div class="r" style="left:168.5px;top:459.1px;width:466.7px;height:1px;background:#e1e5e9;"></div>
<div class="r" style="left:168.5px;top:459.6px;width:466.7px;height:16.9px;background:#ffffff;"></div>
<div class="r" style="left:173px;top:464.6px;width:9px;height:7.5px;background:#2f6fde;"></div>
<div class="t" style="left:191.00px;top:465.21px;font-size:6.784px;line-height:6.784px;font-weight:bold;color:#1f2429;transform:scale(0.9434,1);transform-origin:left center;">Others</div>
<div class="t" style="left:29.40px;width:600px;text-align:right;top:465.10px;font-size:6.996px;line-height:6.996px;font-weight:bold;color:#1f2429;transform:scale(0.9434,1);transform-origin:right center;">48</div>
<div class="r" style="left:168.5px;top:476.5px;width:466.7px;height:21.5px;background:#f3f5f7;"></div>
<div class="r" style="left:168.5px;top:498px;width:466.7px;height:0.8px;background:#e3e6ea;"></div>
<div class="r" style="left:186.1px;top:294.6px;width:0.7px;height:181.89999999999998px;background:#e6e9ed;"></div>
<div class="r" style="left:265.5px;top:294.6px;width:0.7px;height:181.89999999999998px;background:#e6e9ed;"></div>
<div class="r" style="left:572.1px;top:294.6px;width:0.7px;height:181.89999999999998px;background:#e6e9ed;"></div>
<div class="t" style="left:171.60px;top:515.71px;font-size:6.784px;line-height:6.784px;font-weight:bold;color:#1f2429;letter-spacing:-0.127px;transform:scale(0.9434,1);transform-origin:left center;">Perspective</div>
<div class="r" style="left:209.4px;top:510.3px;width:113.1px;height:17.3px;background:#fff;box-sizing:border-box;border:0.8px solid #b9bec4;border-radius:2px;"></div>
<div class="t" style="left:215.60px;top:515.29px;font-size:7.42px;line-height:7.42px;font-weight:normal;color:#2f353b;transform:scale(0.9434,1);transform-origin:left center;">Security issues</div>
<svg class="r" style="left:316.4px;top:517.6px" width="4.4" height="2.4" viewBox="0 0 4.4 2.4"><polygon points="0,0 4.4,0 2.2,2.4" fill="#7b838b"/></svg>
<div class="panel" style="left:641px;top:263px;width:309px;height:195.2px"></div>
<div class="phead" style="left:641px;top:263px;width:309px;height:19px"></div>
<div class="pfoot" style="left:641px;top:446.2px;width:309px;height:12.0px"></div>
<div class="t" style="left:646.00px;top:449.88px;font-size:5.83px;line-height:5.83px;font-weight:normal;color:#3c4248;transform:scale(0.9434,1);transform-origin:left center;">2023-02-07 13:29 - 2023-02-08 13:29</div>
<div class="t" style="left:646.70px;top:269.14px;font-size:7.314px;line-height:7.314px;font-weight:bold;color:#3a4046;letter-spacing:-0.180px;transform:scale(0.9434,1);transform-origin:left center;">Overall Network Performance</div>
<svg class="r" style="left:0;top:0;overflow:visible" width="1" height="1"><circle cx="940.8" cy="272.3" r="2.59" fill="#687880"/><rect x="939.90" y="268.70" width="1.80" height="7.20" fill="#687880" transform="rotate(0 940.8 272.3)" rx="0.36"/><rect x="939.90" y="268.70" width="1.80" height="7.20" fill="#687880" transform="rotate(60 940.8 272.3)" rx="0.36"/><rect x="939.90" y="268.70" width="1.80" height="7.20" fill="#687880" transform="rotate(120 940.8 272.3)" rx="0.36"/><rect x="939.90" y="268.70" width="1.80" height="7.20" fill="#687880" transform="rotate(180 940.8 272.3)" rx="0.36"/><rect x="939.90" y="268.70" width="1.80" height="7.20" fill="#687880" transform="rotate(240 940.8 272.3)" rx="0.36"/><rect x="939.90" y="268.70" width="1.80" height="7.20" fill="#687880" transform="rotate(300 940.8 272.3)" rx="0.36"/><circle cx="940.8" cy="272.3" r="1.30" fill="#f3f5f7"/></svg>
<svg class="r" style="left:923.7px;top:267.5px" width="9" height="9" viewBox="0 0 9 9"><circle cx="4.1" cy="4.1" r="2.6" fill="none" stroke="#687880" stroke-width="1.05"/><line x1="6" y1="6" x2="7.9" y2="7.9" stroke="#687880" stroke-width="1.2" stroke-linecap="round"/></svg>
<svg class="r" style="left:913.5px;top:270.8px" width="4.4" height="2.4" viewBox="0 0 4.4 2.4"><polygon points="0,0 4.4,0 2.2,2.4" fill="#7b838b"/></svg>
<div class="t" style="left:311.00px;width:600px;text-align:right;top:268.64px;font-size:7.314px;line-height:7.314px;font-weight:bold;color:#7b838b;letter-spacing:-0.180px;transform:scale(0.9434,1);transform-origin:right center;">Last 24 hours (generic time span)</div>
<div class="t" style="left:496px;width:600px;text-align:center;top:291.1px;font-size:11.3px;line-height:11.3px;font-weight:bold;color:#2d3339"><span style="display:inline-block;width:4px;height:4px;border-radius:50%;background:#fb8c00;vertical-align:middle;margin-right:5px;position:relative;top:-1px"></span>98<span style="font-weight:normal;color:#6d757c">%</span></div>
<div class="t" style="left:495.30px;width:600px;text-align:center;top:308.09px;font-size:7.42px;line-height:7.42px;font-weight:normal;color:#444b52;transform:scale(0.9434,1);transform-origin:center center;">Retransmission index</div>
<div class="r" style="left:648.3px;top:329.4px;width:293.9000000000001px;height:9.9px;background:#e1e5ea;border-radius:1.5px;"></div>
<div class="r" style="left:648.3px;top:329.4px;width:124.5px;height:9.9px;background:#fb8c00;border-radius:1.5px 0 0 1.5px;"></div>
<div class="r" style="left:771.9px;top:327px;width:1.9px;height:14.9px;background:#111418;"></div>
<div class="t" style="left:648.30px;top:322.00px;font-size:5.194px;line-height:5.194px;font-weight:normal;color:#7a8188;transform:scale(0.9434,1);transform-origin:left center;">0%</div>
<div class="t" style="left:421.50px;width:600px;text-align:center;top:322.00px;font-size:5.194px;line-height:5.194px;font-weight:normal;color:#7a8188;transform:scale(0.9434,1);transform-origin:center center;">90%</div>
<div class="t" style="left:495.40px;width:600px;text-align:center;top:322.00px;font-size:5.194px;line-height:5.194px;font-weight:normal;color:#7a8188;transform:scale(0.9434,1);transform-origin:center center;">99%</div>
<div class="t" style="left:569.00px;width:600px;text-align:center;top:322.00px;font-size:5.194px;line-height:5.194px;font-weight:normal;color:#7a8188;transform:scale(0.9434,1);transform-origin:center center;">99.9%</div>
<div class="t" style="left:342.20px;width:600px;text-align:right;top:322.00px;font-size:5.194px;line-height:5.194px;font-weight:normal;color:#7a8188;transform:scale(0.9434,1);transform-origin:right center;">100%</div>
<div class="t" style="left:648.80px;top:343.80px;font-size:5.194px;line-height:5.194px;font-weight:bold;color:#3a4046;transform:scale(0.9434,1);transform-origin:left center;">Poor</div>
<div class="t" style="left:343.00px;width:600px;text-align:right;top:343.80px;font-size:5.194px;line-height:5.194px;font-weight:bold;color:#3a4046;transform:scale(0.9434,1);transform-origin:right center;">Excellent</div>
<div class="t" style="left:440.00px;width:600px;text-align:center;top:363.04px;font-size:7.314px;line-height:7.314px;font-weight:normal;color:#444b52;transform:scale(0.9434,1);transform-origin:center center;">AVG RTT</div>
<div class="t" style="left:440.00px;width:600px;text-align:center;top:378.87px;font-size:8.268px;line-height:8.268px;font-weight:bold;color:#2d3339;transform:scale(0.9434,1);transform-origin:center center;">104.923 ms</div>
<div class="t" style="left:550.00px;width:600px;text-align:center;top:363.04px;font-size:7.314px;line-height:7.314px;font-weight:normal;color:#444b52;transform:scale(0.9434,1);transform-origin:center center;">AVG SRT</div>
<div class="t" style="left:550.00px;width:600px;text-align:center;top:378.87px;font-size:8.268px;line-height:8.268px;font-weight:bold;color:#2d3339;transform:scale(0.9434,1);transform-origin:center center;">266.22 ms</div>
<div class="t" style="left:440.00px;width:600px;text-align:center;top:403.64px;font-size:7.314px;line-height:7.314px;font-weight:normal;color:#444b52;transform:scale(0.9434,1);transform-origin:center center;">AVG RTR</div>
<div class="t" style="left:440.00px;width:600px;text-align:center;top:419.47px;font-size:8.268px;line-height:8.268px;font-weight:bold;color:#2d3339;transform:scale(0.9434,1);transform-origin:center center;">1.7</div>
<div class="t" style="left:550.00px;width:600px;text-align:center;top:403.64px;font-size:7.314px;line-height:7.314px;font-weight:normal;color:#444b52;transform:scale(0.9434,1);transform-origin:center center;">AVG jitter</div>
<div class="t" style="left:550.00px;width:600px;text-align:center;top:419.47px;font-size:8.268px;line-height:8.268px;font-weight:bold;color:#2d3339;transform:scale(0.9434,1);transform-origin:center center;">721.454 ms</div>
<div class="panel" style="left:641px;top:464px;width:309px;height:100px"></div>
<div class="phead" style="left:641px;top:464px;width:309px;height:19px"></div>
<div class="t" style="left:646.70px;top:470.64px;font-size:7.314px;line-height:7.314px;font-weight:bold;color:#3a4046;letter-spacing:-0.180px;transform:scale(0.9434,1);transform-origin:left center;">Structure of Overall Traffic</div>
<svg class="r" style="left:0;top:0;overflow:visible" width="1" height="1"><circle cx="940.8" cy="473.8" r="2.59" fill="#687880"/><rect x="939.90" y="470.20" width="1.80" height="7.20" fill="#687880" transform="rotate(0 940.8 473.8)" rx="0.36"/><rect x="939.90" y="470.20" width="1.80" height="7.20" fill="#687880" transform="rotate(60 940.8 473.8)" rx="0.36"/><rect x="939.90" y="470.20" width="1.80" height="7.20" fill="#687880" transform="rotate(120 940.8 473.8)" rx="0.36"/><rect x="939.90" y="470.20" width="1.80" height="7.20" fill="#687880" transform="rotate(180 940.8 473.8)" rx="0.36"/><rect x="939.90" y="470.20" width="1.80" height="7.20" fill="#687880" transform="rotate(240 940.8 473.8)" rx="0.36"/><rect x="939.90" y="470.20" width="1.80" height="7.20" fill="#687880" transform="rotate(300 940.8 473.8)" rx="0.36"/><circle cx="940.8" cy="473.8" r="1.30" fill="#f3f5f7"/></svg>
<svg class="r" style="left:923.7px;top:469.0px" width="9" height="9" viewBox="0 0 9 9"><circle cx="4.1" cy="4.1" r="2.6" fill="none" stroke="#687880" stroke-width="1.05"/><line x1="6" y1="6" x2="7.9" y2="7.9" stroke="#687880" stroke-width="1.2" stroke-linecap="round"/></svg>
<svg class="r" style="left:913.5px;top:472.3px" width="4.4" height="2.4" viewBox="0 0 4.4 2.4"><polygon points="0,0 4.4,0 2.2,2.4" fill="#7b838b"/></svg>
<div class="t" style="left:311.00px;width:600px;text-align:right;top:470.14px;font-size:7.314px;line-height:7.314px;font-weight:bold;color:#7b838b;letter-spacing:-0.180px;transform:scale(0.9434,1);transform-origin:right center;">Last 24 hours (generic time span)</div>
<svg class="r" style="left:0;top:0" width="960" height="540"><line x1="675.3" y1="504.5" x2="939.2" y2="504.5" stroke="#e8eaed" stroke-width="0.7"/><line x1="675.3" y1="517.5" x2="939.2" y2="517.5" stroke="#e8eaed" stroke-width="0.7"/><line x1="675.3" y1="530.8" x2="939.2" y2="530.8" stroke="#e8eaed" stroke-width="0.7"/><line x1="692.5" y1="493.3" x2="692.5" y2="540" stroke="#e6e8eb" stroke-width="0.7"/><line x1="725.5" y1="493.3" x2="725.5" y2="540" stroke="#e6e8eb" stroke-width="0.7"/><line x1="758.7" y1="493.3" x2="758.7" y2="540" stroke="#e6e8eb" stroke-width="0.7"/><line x1="791.7" y1="493.3" x2="791.7" y2="540" stroke="#e6e8eb" stroke-width="0.7"/><line x1="824.7" y1="493.3" x2="824.7" y2="540" stroke="#e6e8eb" stroke-width="0.7"/><line x1="857.5" y1="493.3" x2="857.5" y2="540" stroke="#e6e8eb" stroke-width="0.7"/><line x1="890.5" y1="493.3" x2="890.5" y2="540" stroke="#e6e8eb" stroke-width="0.7"/><line x1="923.3" y1="493.3" x2="923.3" y2="540" stroke="#e6e8eb" stroke-width="0.7"/><line x1="675.3" y1="493.3" x2="675.3" y2="540" stroke="#9aa0a6" stroke-width="0.8"/><line x1="672.2" y1="504.5" x2="675.3" y2="504.5" stroke="#9aa0a6" stroke-width="0.7"/><line x1="672.2" y1="517.5" x2="675.3" y2="517.5" stroke="#9aa0a6" stroke-width="0.7"/><line x1="672.2" y1="530.8" x2="675.3" y2="530.8" stroke="#9aa0a6" stroke-width="0.7"/><rect x="682.15" y="504.2" width="1.3" height="35.80" fill="#55e630"/><rect x="684.65" y="535.8" width="1.3" height="4.20" fill="#55e630"/><rect x="676.85" y="537.5" width="1.3" height="2.50" fill="#55e630"/><rect x="691.35" y="530" width="1.3" height="10.00" fill="#55e630"/><rect x="692.35" y="527.8" width="1.3" height="12.20" fill="#55e630"/><rect x="704.15" y="507.2" width="1.3" height="32.80" fill="#55e630"/><rect x="706.85" y="532" width="1.3" height="8.00" fill="#55e630"/><rect x="700.15" y="537.5" width="1.3" height="2.50" fill="#55e630"/><rect x="726.05" y="504.7" width="1.3" height="35.30" fill="#55e630"/><rect x="728.85" y="537" width="1.3" height="3.00" fill="#55e630"/><rect x="736.05" y="526.3" width="1.3" height="13.70" fill="#55e630"/><rect x="748.15" y="501.7" width="1.3" height="38.30" fill="#55e630"/><rect x="750.65" y="536" width="1.3" height="4.00" fill="#55e630"/><rect x="757.35" y="537.5" width="1.3" height="2.50" fill="#55e630"/><rect x="769.85" y="507.2" width="1.3" height="32.80" fill="#55e630"/><rect x="769.05" y="534" width="1.3" height="6.00" fill="#55e630"/><rect x="772.65" y="529.7" width="1.3" height="10.30" fill="#55e630"/><rect x="785.65" y="508.3" width="1.3" height="31.70" fill="#55e630"/><rect x="791.85" y="505.8" width="1.3" height="34.20" fill="#55e630"/><rect x="794.85" y="536" width="1.3" height="4.00" fill="#55e630"/><rect x="814.05" y="507.2" width="1.3" height="32.80" fill="#55e630"/><rect x="816.85" y="534.7" width="1.3" height="5.30" fill="#55e630"/><rect x="836.05" y="502" width="1.3" height="38.00" fill="#55e630"/><rect x="838.85" y="533.7" width="1.3" height="6.30" fill="#55e630"/><rect x="851.35" y="535.5" width="1.3" height="4.50" fill="#55e630"/><rect x="857.65" y="506.7" width="1.3" height="33.30" fill="#55e630"/><rect x="860.65" y="536" width="1.3" height="4.00" fill="#55e630"/><rect x="879.85" y="506.7" width="1.3" height="33.30" fill="#55e630"/><rect x="882.65" y="535.5" width="1.3" height="4.50" fill="#55e630"/><rect x="901.65" y="507.2" width="1.3" height="32.80" fill="#55e630"/><rect x="904.65" y="536" width="1.3" height="4.00" fill="#55e630"/><rect x="912.05" y="532" width="1.3" height="8.00" fill="#55e630"/><rect x="923.85" y="503" width="1.3" height="37.00" fill="#55e630"/><rect x="926.85" y="536" width="1.3" height="4.00" fill="#55e630"/><rect x="679.35" y="538" width="1.3" height="2.00" fill="#55e630"/><rect x="695.35" y="538.5" width="1.3" height="1.50" fill="#55e630"/><rect x="711.35" y="538" width="1.3" height="2.00" fill="#55e630"/><rect x="715.35" y="538.5" width="1.3" height="1.50" fill="#55e630"/><rect x="741.35" y="538.5" width="1.3" height="1.50" fill="#55e630"/><rect x="761.35" y="538.5" width="1.3" height="1.50" fill="#55e630"/><rect x="779.35" y="538" width="1.3" height="2.00" fill="#55e630"/><rect x="799.35" y="538.5" width="1.3" height="1.50" fill="#55e630"/><rect x="825.35" y="538" width="1.3" height="2.00" fill="#55e630"/><rect x="829.35" y="538.5" width="1.3" height="1.50" fill="#55e630"/><rect x="845.35" y="538.5" width="1.3" height="1.50" fill="#55e630"/><rect x="867.35" y="538.5" width="1.3" height="1.50" fill="#55e630"/><rect x="873.35" y="538" width="1.3" height="2.00" fill="#55e630"/><rect x="889.35" y="538.5" width="1.3" height="1.50" fill="#55e630"/><rect x="897.35" y="538" width="1.3" height="2.00" fill="#55e630"/><rect x="917.35" y="538" width="1.3" height="2.00" fill="#55e630"/><rect x="933.35" y="538.5" width="1.3" height="1.50" fill="#55e630"/></svg>
<div class="t" style="left:70.80px;width:600px;text-align:right;top:501.85px;font-size:5.3px;line-height:5.3px;font-weight:normal;color:#5a6168;transform:scale(0.9434,1);transform-origin:right center;">60M</div>
<div class="t" style="left:70.80px;width:600px;text-align:right;top:514.85px;font-size:5.3px;line-height:5.3px;font-weight:normal;color:#5a6168;transform:scale(0.9434,1);transform-origin:right center;">40M</div>
<div class="t" style="left:70.80px;width:600px;text-align:right;top:528.15px;font-size:5.3px;line-height:5.3px;font-weight:normal;color:#5a6168;transform:scale(0.9434,1);transform-origin:right center;">20M</div>
<div class="t" style="left:628.3px;top:515.9px;width:40px;text-align:center;font-size:6.2px;line-height:6px;color:#5a6168;transform:rotate(-90deg)">bits/s</div>
</body></html>
